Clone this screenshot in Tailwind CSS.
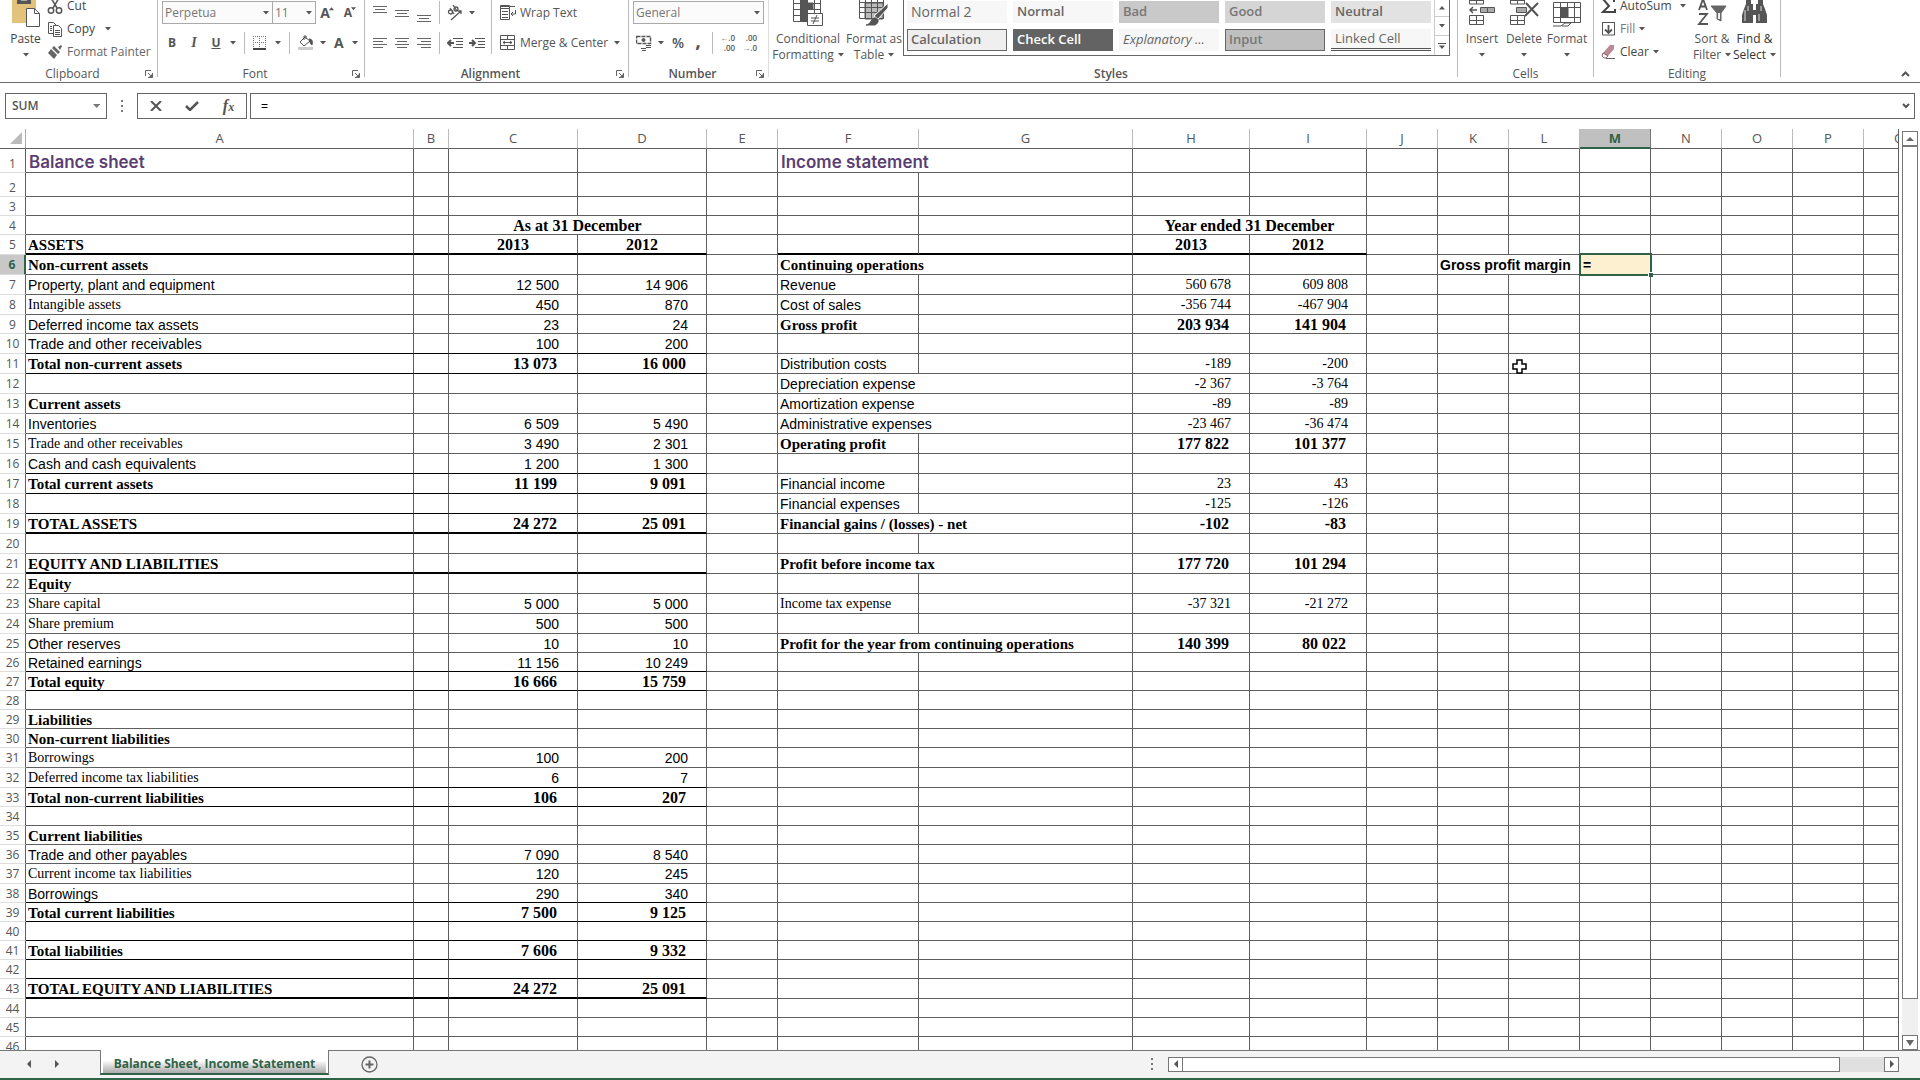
<!DOCTYPE html>
<html lang="en">
<head>
  <meta charset="UTF-8" />
  <meta name="viewport" content="width=device-width, initial-scale=1.0"/>
  <title>Balance Sheet, Income Statement</title>
  <script src="https://cdn.jsdelivr.net/npm/@tailwindcss/browser@4"></script>
</head>
<body class="h-screen flex flex-col overflow-hidden bg-white text-xs text-[#555] font-['Open_Sans',sans-serif]">

  <!-- shared icons -->
  <svg class="hidden">
    <symbol id="chev" viewBox="0 0 6 4"><path d="M0 0h6L3 3.5z" fill="#555"/></symbol>
    <symbol id="launcher" viewBox="0 0 8 8"><path d="M.5 6V.5H6M3 3l3 3M7.5 3v4.5H3" fill="none" stroke="#666"/><path d="M7.500 3.500v4h-4z" fill="#666"/></symbol>
  </svg>

  <!-- ribbon -->
  <header class="flex shrink-0 h-[83px] border-b border-[#6b6b6b] overflow-hidden whitespace-nowrap">
    <section class="w-[157px] flex flex-col">
      <div class="h-16 shrink-0 pb-px flex items-end overflow-hidden">
        <button class="w-[47px] pl-1 flex flex-col items-center leading-4 text-[#444]">
          <svg class="w-[30px] h-[36px] shrink-0 mb-1" viewBox="0 0 30 36"><path d="M1 8h24v24H1z" fill="#e3c27c"/><path d="M6 4h14v9H6z" fill="#555"/><path d="M10 6.500h6v3h-6z" fill="#fff"/><path d="M15.500 17.500h8l5 5v13h-13z" fill="#fff" stroke="#555"/><path d="M23.500 17.500v5h5" fill="none" stroke="#555"/></svg>
          <span>Paste</span>
          <svg class="w-1.5 h-1 my-1.5"><use href="#chev"/></svg>
        </button>
        <div class="flex flex-col text-[#444]">
          <button class="h-[23px] flex items-center gap-1">
            <svg class="w-4 h-4" viewBox="0 0 16 16" fill="none" stroke="#555" stroke-width="1.500"><path d="M4 0l6 10M12 0L6 10"/><circle cx="4" cy="12.500" r="2.700"/><circle cx="12" cy="12.500" r="2.700"/></svg>Cut
          </button>
          <button class="h-[23px] flex items-center gap-1">
            <svg class="w-4 h-4" viewBox="0 0 16 16" fill="#fff" stroke="#555"><path d="M1.500 1.500h5l3 3v8h-8z"/><path d="M6.500 4.500h5l3 3v8h-8z"/><path d="M8 9.500h5M8 11.500h5M8 13.500h5M3 5.500h2M3 7.500h2M3 9.500h2"/></svg>Copy
            <svg class="w-1.5 h-1 ml-1.5"><use href="#chev"/></svg>
          </button>
          <button class="h-[23px] flex items-center gap-1 text-[#666]">
            <svg class="w-4 h-4" viewBox="0 0 16 16" fill="#666"><path d="M11 3l3-2 1 1-2 4zM7 2l6 6-2 2-6-6z"/><path d="M4 5l6 6-3 4-6-6z"/></svg>Format Painter
          </button>
        </div>
      </div>
      <div class="flex items-center justify-center leading-5"><span class="flex-1 text-center">Clipboard</span><svg class="w-2 h-2 mr-1"><use href="#launcher"/></svg></div>
    </section>
    <div class="w-px h-[77px] bg-[#bbb]"></div>

    <section class="w-[206px] flex flex-col">
      <div class="h-16 shrink-0 pt-px flex flex-col gap-2">
        <div class="flex items-center">
          <label class="relative ml-1 flex items-center"><select aria-label="Font name" class="appearance-none w-[111px] h-[23px] border border-[#aaa] bg-[#fbfbfb] pl-0.5 text-[#777]"><option>Perpetua</option></select><svg class="absolute right-1 w-1.5 h-1"><use href="#chev"/></svg></label>
          <label class="relative flex items-center"><select aria-label="Font size" class="appearance-none w-[43px] h-[23px] border border-l-0 border-[#aaa] bg-[#fbfbfb] pl-0.5 text-[#777]"><option>11</option></select><svg class="absolute right-1 w-1.5 h-1"><use href="#chev"/></svg></label>
          <button aria-label="Increase font size" class="w-[22px] flex justify-center font-bold text-sm">A<svg class="w-[5px] h-1 mt-1 -ml-px" viewBox="0 0 6 4"><path d="M0 3.500h6L3 0z" fill="#555"/></svg></button>
          <button aria-label="Decrease font size" class="w-6 flex justify-center font-bold">A<svg class="w-[5px] h-1 mt-0.5 -ml-px"><use href="#chev"/></svg></button>
        </div>
        <div class="flex items-center h-[22px]">
          <button class="w-[22px] ml-[3px] font-bold">B</button>
          <button class="w-[22px] font-bold italic font-['Liberation_Serif',serif] text-sm">I</button>
          <button class="w-[22px] font-bold underline">U</button>
          <svg class="w-1.5 h-1 ml-[3px]"><use href="#chev"/></svg>
          <div class="w-px h-full ml-2 bg-[#bbb]"></div>
          <button class="ml-2 flex items-center gap-2">
            <svg class="w-3.5 h-3.5" viewBox="0 0 14 14" fill="none" stroke="#777"><path d="M.5 0v12M6.500 0v12M12.500 0v12M0 .5h13M0 6.500h13" stroke-dasharray="1 1"/><path d="M0 13h13" stroke="#444" stroke-width="2"/></svg>
            <svg class="w-1.5 h-1"><use href="#chev"/></svg>
          </button>
          <div class="w-px h-full ml-2 bg-[#bbb]"></div>
          <button class="ml-2 flex items-center gap-1.5">
            <svg class="w-4 h-4" viewBox="0 0 16 16" fill="none" stroke="#555"><path d="M7 2L2 7l4 4 6-5zM6 5V1h2v3"/><path d="M11 4c3 0 4 2 3 6-2-1-2-3-3-6z" fill="#555"/><path d="M0 13.500h15" stroke="#ccc" stroke-width="3"/></svg>
            <svg class="w-1.5 h-1"><use href="#chev"/></svg>
          </button>
          <button class="ml-2 flex items-center gap-2 font-bold text-sm">A<svg class="w-1.5 h-1"><use href="#chev"/></svg></button>
        </div>
      </div>
      <div class="flex items-center leading-5"><span class="flex-1 text-center">Font</span><svg class="w-2 h-2 mr-1"><use href="#launcher"/></svg></div>
    </section>
    <div class="w-px h-[77px] bg-[#bbb]"></div>

    <section class="w-[263px] flex flex-col">
      <div class="h-16 shrink-0 flex">
        <div class="flex flex-col gap-2 pt-px">
          <div class="flex items-center h-[23px]">
            <svg class="w-[59px] h-5 ml-2" viewBox="0 0 59 20" stroke="#666"><path d="M0 3.500h14M2 6.500h10M0 9.500h14M22 7.500h14M24 10.500h10M22 13.500h14M44 12.500h14M46 15.500h10M44 18.500h14"/></svg>
            <div class="w-px h-full ml-[7px] bg-[#bbb]"></div>
            <button class="ml-[7px] flex items-center gap-1.5">
              <svg class="w-4 h-4" viewBox="0 0 16 16" fill="none" stroke="#555" stroke-width="1.300"><circle cx="3.500" cy="7" r="2"/><path d="M3 3l4 6M6 0l4 6"/><circle cx="9" cy="4" r="2"/><path d="M4 15L14 6M11 6h3v3"/></svg>
              <svg class="w-1.5 h-1"><use href="#chev"/></svg>
            </button>
          </div>
          <div class="flex items-center h-[22px]">
            <svg class="w-[59px] h-3 ml-2" viewBox="0 0 59 12" stroke="#666"><path d="M0 1.500h14M0 4.500h10M0 7.500h14M0 10.500h10M22 1.500h14M24 4.500h10M22 7.500h14M24 10.500h10M44 1.500h14M48 4.500h10M44 7.500h14M48 10.500h10"/></svg>
            <div class="w-px h-full ml-[7px] bg-[#bbb]"></div>
            <svg class="w-10 h-3 ml-[7px]" viewBox="0 0 40 12" stroke="#555" fill="none"><path d="M6 1.500h10M9 4.500h7M9 7.500h7M6 10.500h10M28 1.500h10M31 4.500h7M31 7.500h7M28 10.500h10"/><path d="M7 6H1M4 3L1 6l3 3M22 6h6M25 3l3 3-3 3" stroke-width="2"/></svg>
          </div>
        </div>
        <div class="w-px h-[54px] ml-1 bg-[#bbb]"></div>
        <div class="flex flex-col gap-2 pt-px">
          <button class="h-[23px] ml-2 flex items-center gap-1">
            <svg class="w-4 h-4" viewBox="0 0 16 16" fill="none" stroke="#555"><path d="M.5.5h9v3h-9zM.5 3.500h9v11h-9zM2 6.500h6M2 9.500h6M2 12.500h6M1 1.500h14M15.500 5v4H11M13 7l-2 2 2 2"/></svg>Wrap Text
          </button>
          <button class="h-[22px] ml-2 flex items-center gap-1">
            <svg class="w-4 h-4" viewBox="0 0 16 16" fill="none" stroke="#555"><path d="M.5.5h14v14H.5zM0 4.500h15M0 10.500h15M7.500 0v4M7.500 11v4M3 7.500h9M5 6L3 7.500 5 9M10 6l2 1.500L10 9"/></svg>Merge &amp; Center
            <svg class="w-1.5 h-1 ml-0.5"><use href="#chev"/></svg>
          </button>
        </div>
      </div>
      <div class="flex items-center leading-5 font-semibold"><span class="flex-1 text-center">Alignment</span><svg class="w-2 h-2 mr-1"><use href="#launcher"/></svg></div>
    </section>
    <div class="w-px h-[77px] bg-[#bbb]"></div>

    <section class="w-[139px] flex flex-col">
      <div class="h-16 shrink-0 pt-px flex flex-col gap-2">
        <label class="relative ml-1 w-[131px] flex items-center"><select aria-label="Number format" class="appearance-none w-full h-[23px] border border-[#aaa] bg-[#fbfbfb] pl-0.5 text-[#777]"><option>General</option></select><svg class="absolute right-1 w-1.5 h-1"><use href="#chev"/></svg></label>
        <div class="flex items-center h-[22px]">
          <svg class="w-4 h-4 ml-[7px]" viewBox="0 0 16 16" fill="none" stroke="#555"><path d="M.5 1.500h14v7H.5z" stroke-dasharray="4 1" stroke-width="1.500"/><circle cx="7.500" cy="5" r="1.500" fill="#555"/><path d="M10 10.500h5M5 13.500h5M10 12.500h5M6 15.500h4"/></svg>
          <svg class="w-1.5 h-1 ml-1.5"><use href="#chev"/></svg>
          <button class="ml-2 text-sm font-semibold">%</button>
          <button class="ml-2 w-3 h-[22px] pb-1.5 text-xl leading-3 font-bold">,</button>
          <div class="w-px h-full ml-2 bg-[#bbb]"></div>
          <button aria-label="Increase decimal" class="ml-1.5 w-4 text-[8px] leading-[10px] font-semibold text-right">←.0<br>.00</button>
          <button aria-label="Decrease decimal" class="ml-1.5 w-4 text-[8px] leading-[10px] font-semibold text-right">.00<br>→.0</button>
        </div>
      </div>
      <div class="flex items-center leading-5 font-semibold"><span class="flex-1 text-center">Number</span><svg class="w-2 h-2 mr-1"><use href="#launcher"/></svg></div>
    </section>
    <div class="w-px h-[77px] bg-[#ddd]"></div>

    <section class="w-[688px] flex flex-col">
      <div class="h-16 shrink-0 flex">
        <div class="flex items-end pb-px">
          <button class="w-[74px] ml-0.5 flex flex-col items-center leading-4">
            <svg class="w-[30px] h-[30px] mb-1" viewBox="0 0 30 30" fill="none" stroke="#555"><path d="M.5.5h27v24H.5zM.5 6.500h27M.5 12.500h27M.5 18.500h27M7.500 0v24M14.500 0v24M21.500 0v24"/><path d="M8 0h6v6h6v6h-6v12H8z" fill="#555"/><path d="M14.500 16.500h15v12h-15z" fill="#fff"/><path d="M18 21h8M18 24h8M24 18l-4 9"/></svg>
            <span>Conditional</span><span class="flex items-center gap-1">Formatting<svg class="w-1.5 h-1"><use href="#chev"/></svg></span>
          </button>
          <button class="w-[58px] flex flex-col items-center leading-4">
            <svg class="w-[30px] h-[30px] mb-1" viewBox="0 0 30 30" fill="none" stroke="#555"><path d="M6 6h18v16H6z" fill="#bbb"/><path d="M.5.5h24v21H.5zM.5 5.500h24M.5 10.500h24M.5 15.500h24M6.500 0v21M12.500 0v21M18.500 0v21"/><path d="M29 6v5L19 22l-4-3z" fill="#555" stroke="#fff"/><path d="M7 28c5 0 5-8 10-7 3 1 3 5-1 7z" fill="#555"/></svg>
            <span>Format as</span><span class="flex items-center gap-1">Table<svg class="w-1.5 h-1"><use href="#chev"/></svg></span>
          </button>
        </div>
        <div class="h-14 flex border border-t-0 border-[#666]">
          <div class="grid grid-cols-[repeat(5,100px)] grid-rows-[22px_22px] gap-1.5 pt-px px-[3px] text-left font-semibold text-[13px] text-[#666]">
            <button class="bg-[#f7f7f7] pl-1 text-left text-sm font-normal">Normal 2</button>
            <button class="bg-[#f7f7f7] pl-1 text-left">Normal</button>
            <button class="bg-[#c9c9c9] pl-1 text-left text-[#777]">Bad</button>
            <button class="bg-[#d5d5d5] pl-1 text-left text-[#777]">Good</button>
            <button class="bg-[#e2e2e2] pl-1 text-left">Neutral</button>
            <button class="bg-[#efefef] border border-[#666] pl-[3px] text-left">Calculation</button>
            <button class="bg-[#636363] pl-1 text-left text-white">Check Cell</button>
            <button class="bg-[#f7f7f7] pl-1 text-left italic font-normal">Explanatory ...</button>
            <button class="bg-[#bfbfbf] border border-[#666] pl-[3px] text-left text-[#777]">Input</button>
            <button class="bg-[#f7f7f7] border-b-3 border-double border-[#555] pl-1 text-left font-normal">Linked Cell</button>
          </div>
          <div class="w-[15px] flex flex-col border-l border-[#ccc]">
            <button aria-label="Row up" class="h-[17px] flex items-center justify-center border-b border-[#ccc]"><svg class="w-1.5 h-1" viewBox="0 0 6 4"><path d="M0 3.500h6L3 0z" fill="#555"/></svg></button>
            <button aria-label="Row down" class="h-[19px] flex items-center justify-center border-b border-[#ccc]"><svg class="w-1.5 h-1"><use href="#chev"/></svg></button>
            <button aria-label="More styles" class="h-[19px] flex items-center justify-center"><svg class="w-2 h-1.5" viewBox="0 0 8 6" fill="#555"><path d="M0 0h8v1H0zM1 2.500h6L4 6z"/></svg></button>
          </div>
        </div>
      </div>
      <div class="text-center leading-5 font-semibold pr-1">Styles</div>
    </section>
    <div class="w-px h-[77px] bg-[#bbb]"></div>

    <section class="w-[135px] flex flex-col">
      <div class="h-16 shrink-0 pb-px pl-1 flex items-end">
        <button class="w-[40px] flex flex-col items-center leading-4">
          <svg class="w-[28px] h-[30px] mb-1" viewBox="0 0 28 30" fill="none" stroke="#555"><path d="M1.500 0v7h14V0M8.500 0v7M1.500 3.500h14M1.500 18.500h14v9h-14zM8.500 18v10M1.500 23.500h14"/><path d="M12.500 10.500h14v5h-14z" fill="#aaa"/><path d="M19.500 10v6"/><path d="M9 13H2M5 10l-3 3 3 3" stroke-width="1.500"/></svg>
          <span>Insert</span><svg class="w-1.5 h-1 my-1.5"><use href="#chev"/></svg>
        </button>
        <button class="w-[44px] flex flex-col items-center leading-4">
          <svg class="w-[30px] h-[30px] mb-1" viewBox="0 0 30 30" fill="none" stroke="#555"><path d="M1.500 0v7h14V0M8.500 0v7M1.500 3.500h14M1.500 18.500h14v9h-14zM8.500 18v10M1.500 23.500h14"/><path d="M7.500 10.500h10v5h-10z" fill="#aaa"/><path d="M17 6l12 13M29 6L16 19" stroke-width="2"/></svg>
          <span>Delete</span><svg class="w-1.5 h-1 my-1.5"><use href="#chev"/></svg>
        </button>
        <button class="w-[42px] flex flex-col items-center leading-4">
          <svg class="w-[30px] h-[30px] mb-1" viewBox="0 0 30 30" fill="none" stroke="#555"><path d="M2 1h24M5 0v3M23 0v3M1.500 5.500h27v20h-27zM1.500 10.500h27M1.500 20.500h27M8.500 5v20M15.500 5v6M22.500 5v20M1 29h8l4-3h6l-3 3h-6"/><path d="M9 11h7v9H9z" fill="#555"/></svg>
          <span>Format</span><svg class="w-1.5 h-1 my-1.5"><use href="#chev"/></svg>
        </button>
      </div>
      <div class="text-center leading-5 font-medium">Cells</div>
    </section>
    <div class="w-px h-[77px] bg-[#bbb]"></div>

    <section class="w-[186px] flex flex-col">
      <div class="h-16 shrink-0 pb-px pl-[7px] flex items-end">
        <div class="w-[94px] flex flex-col text-[#444]">
          <button class="h-[23px] flex items-center gap-1">
            <svg class="w-[15px] h-4" viewBox="0 0 15 16" fill="none" stroke="#444" stroke-width="2"><path d="M13 4V1H2l6 7-6 6h12v-3"/></svg>AutoSum
            <svg class="w-1.5 h-1 ml-1"><use href="#chev"/></svg>
          </button>
          <button class="h-[23px] flex items-center gap-1 text-[#777]">
            <svg class="w-[15px] h-[15px]" viewBox="0 0 15 15" fill="none" stroke="#555"><path d="M1.500 1v13h12V1M1 1.500h13" /><path d="M7.500 4v8M4 8.500L7.500 12 11 8.500" stroke-width="1.800"/></svg>Fill<svg class="w-1.5 h-1"><use href="#chev"/></svg>
          </button>
          <button class="h-[23px] flex items-center gap-1">
            <svg class="w-[15px] h-4" viewBox="0 0 15 16"><path d="M9 1h4v4l-6 7H3L2 9z" fill="#b88a94"/><path d="M2 9l5 3-2 2H3l-2-2z" fill="#fff" stroke="#965f6c"/><path d="M5 14.500h9" stroke="#666"/></svg>Clear<svg class="w-1.5 h-1"><use href="#chev"/></svg>
          </button>
        </div>
        <button class="w-[34px] flex flex-col items-center leading-4">
          <svg class="w-[30px] h-[30px] mb-1" viewBox="0 0 30 30" fill="none" stroke="#555" stroke-width="1.800"><path d="M2 13L6 2l4 11M3 9.500h6M2 17h8L2 27h9"/><path d="M14 9h15l-5 7v8l-4-2v-6z" fill="#666" stroke="#666" stroke-width="1"/><path d="M22 16v6" stroke="#fff"/></svg>
          <span>Sort &amp;</span><span class="flex items-center gap-1">Filter<svg class="w-1.5 h-1"><use href="#chev"/></svg></span>
        </button>
        <button class="w-[51px] flex flex-col items-center leading-4 text-[#333]">
          <svg class="w-[27px] h-[30px] mb-1" viewBox="0 0 27 30" fill="#555"><path d="M5 3h5v4h2v6h3V7h2V3h5v4l2 5 2 6v8H15v-8h-3v8H1v-8l2-6 2-5z"/><path d="M4 13v11M7 9v5M20 9v5M18 17v7" stroke="#ddd"/></svg>
          <span>Find &amp;</span><span class="flex items-center gap-1">Select<svg class="w-1.5 h-1"><use href="#chev"/></svg></span>
        </button>
      </div>
      <div class="text-center leading-5 font-medium">Editing</div>
    </section>
    <div class="w-px h-[77px] bg-[#bbb]"></div>
    <div class="flex-1 flex items-end justify-end pb-1 pr-2.5">
      <button aria-label="Collapse ribbon"><svg class="w-[9px] h-2" viewBox="0 0 9 8" fill="none" stroke="#555" stroke-width="2"><path d="M1 6l3.500-3.500L8 6"/></svg></button>
    </div>
  </header>

  <!-- formula bar -->
  <div class="flex shrink-0 py-2.5 pl-[5px] pr-[5px]">
    <div class="w-[102px] h-[26px] flex items-center border border-[#666] pl-1.5 pr-1.5">
      <input aria-label="Name box" value="SUM" class="w-full min-w-0 font-semibold outline-none">
      <svg class="w-2 h-1" viewBox="0 0 6 4" preserveAspectRatio="none"><path d="M0 0h6L3 4z" fill="#777"/></svg>
    </div>
    <div class="w-[30px] flex flex-col items-center justify-center gap-[3px]"><i class="w-0.5 h-0.5 bg-[#777]"></i><i class="w-0.5 h-0.5 bg-[#777]"></i><i class="w-0.5 h-0.5 bg-[#777]"></i></div>
    <div class="w-[110px] h-[26px] flex items-center justify-around border border-[#666]">
      <button aria-label="Cancel"><svg class="w-3 h-2.5" viewBox="0 0 12 10" fill="none" stroke="#555" stroke-width="2"><path d="M1 0l10 10M11 0L1 10"/></svg></button>
      <button aria-label="Enter"><svg class="w-3.5 h-2.5" viewBox="0 0 14 10" fill="none" stroke="#555" stroke-width="2.500"><path d="M1 5l4 4 8-8"/></svg></button>
      <button class="font-['Liberation_Serif',serif] italic font-bold text-base leading-5">f<span class="text-xs">x</span></button>
    </div>
    <div class="flex-1 h-[26px] ml-[3px] flex items-center border border-[#666] pl-2.5 pr-1">
      <input aria-label="Formula bar" value="=" class="flex-1 text-black font-['Liberation_Sans',sans-serif] outline-none">
      <svg class="w-2 h-1.5" viewBox="0 0 8 6" fill="none" stroke="#555" stroke-width="2"><path d="M1 1l3 3 3-3"/></svg>
    </div>
  </div>

  <!-- sheet -->
  <main class="flex-1 min-h-0 flex">
    <div class="relative flex-1 min-w-0 overflow-hidden border-r border-[#5f5f5f]">
      <table class="table-fixed w-[1935px] border-separate border-spacing-0 text-black whitespace-nowrap">
        <colgroup>
          <col class="w-[26px]"><col class="w-[388px]"><col class="w-[35px]"><col class="w-[129px]"><col class="w-[129px]"><col class="w-[71px]"><col class="w-[141px]"><col class="w-[214px]"><col class="w-[117px]"><col class="w-[117px]"><col class="w-[71px]"><col class="w-[71px]"><col class="w-[71px]"><col class="w-[71px]"><col class="w-[71px]"><col class="w-[71px]"><col class="w-[71px]"><col class="w-[71px]">
        </colgroup>
        <thead><tr id="cols" class="h-5"></tr></thead>
        <tbody id="rows"></tbody>
      </table>
      <svg class="absolute left-[1512px] top-[230px] w-[15px] h-[15px]" viewBox="0 0 15 15"><path d="M5 1h5v4h4v5h-4v4H5v-4H1V5h4z" fill="#fff" stroke="#000" stroke-width="1.500"/></svg>
    </div>
    <div class="w-[21px] flex flex-col items-stretch pl-[3px] pr-0.5 pt-0.5">
      <button aria-label="Scroll up" class="h-[15px] flex items-center justify-center border border-[#777]"><svg class="w-2 h-1" viewBox="0 0 8 4"><path d="M0 4h8L4 0z" fill="#666"/></svg></button>
      <div class="flex-1 bg-[#f0f0f0]"><div class="h-[96%] bg-white border border-[#777]"></div></div>
      <button aria-label="Scroll down" class="h-[15px] flex items-center justify-center border border-[#777]"><svg class="w-2 h-1.5" viewBox="0 0 8 6"><path d="M0 0h8L4 6z" fill="#666"/></svg></button>
    </div>
  </main>

  <!-- sheet tabs -->
  <footer class="shrink-0 h-[30px] flex bg-[#f3f3f3] border-b-2 border-[#2f6246]">
    <div class="w-[100px] flex items-center border-t border-[#777] gap-6 pl-[27px] pb-0.5">
      <button aria-label="Previous sheet"><svg class="w-1 h-2" viewBox="0 0 4 8"><path d="M4 0v8L0 4z" fill="#555"/></svg></button>
      <button aria-label="Next sheet"><svg class="w-1 h-2" viewBox="0 0 4 8"><path d="M0 0v8l4-4z" fill="#555"/></svg></button>
    </div>
    <button class="w-[229px] h-[25px] pt-0.5 px-0.5 border-x border-[#777] border-b-2 border-b-[#2f6246] bg-white text-[#2f6246] font-bold"><span class="block h-[21px] leading-[23px] bg-linear-to-b from-white from-40% to-[#aaa]">Balance Sheet, Income Statement</span></button>
    <div class="flex-1 flex border-t border-[#777] pl-8 pb-px items-center">
      <button aria-label="New sheet"><svg class="w-[17px] h-[17px]" viewBox="0 0 17 17" fill="none" stroke="#666"><circle cx="8.500" cy="8.500" r="7.500" stroke-width="1.300"/><path d="M8.500 4.500v8M4.500 8.500h8" stroke-width="2"/></svg></button>
      <div class="flex-1"></div>
      <div class="flex flex-col gap-[3px] mr-[15px]"><i class="w-0.5 h-0.5 bg-[#777]"></i><i class="w-0.5 h-0.5 bg-[#777]"></i><i class="w-0.5 h-0.5 bg-[#777]"></i></div>
      <div class="w-[731px] h-[15px] flex mr-[21px] bg-[#e0e0e0]">
        <button aria-label="Scroll left" class="w-[15px] flex items-center justify-center border border-[#777] bg-white"><svg class="w-1 h-2" viewBox="0 0 4 8"><path d="M4 0v8L0 4z" fill="#555"/></svg></button>
        <div class="flex-1 flex"><div class="w-[657px] bg-white border border-l-0 border-[#777]"></div></div>
        <button aria-label="Scroll right" class="w-[15px] flex items-center justify-center border border-[#777] bg-white"><svg class="w-1 h-2" viewBox="0 0 4 8"><path d="M0 0v8l4-4z" fill="#555"/></svg></button>
      </div>
    </div>
  </footer>

  <script>
    const letters = 'ABCDEFGHIJKLMNOPQ'.split('');

    // cell styles
    const styles = {
      title: "align-bottom font-['Inter',sans-serif] font-semibold text-[17px] leading-5 text-[#5b3f73] pl-[3px]",
      sans: "align-top pt-0.5 font-['Liberation_Sans',sans-serif] text-sm leading-4 pl-0.5",
      serif: "align-top pt-0.5 font-['Liberation_Serif',serif] text-sm leading-4 pl-0.5",
      bold: "align-top pt-0.5 font-['Liberation_Serif',serif] font-bold text-[15px] leading-4 pl-0.5",
      center: "align-top pt-0.5 font-['Liberation_Serif',serif] font-bold text-base leading-4 text-center",
      numSans: "align-top pt-0.5 font-['Liberation_Sans',sans-serif] text-sm leading-4 text-right pr-[18px]",
      numSerif: "align-top pt-0.5 font-['Liberation_Serif',serif] text-sm leading-4 text-right pr-[18px]",
      numBold: "align-top pt-0.5 font-['Liberation_Serif',serif] font-bold text-base leading-4 text-right pr-5",
      label: "align-top pt-0.5 font-['Liberation_Sans',sans-serif] font-bold text-sm leading-4 pl-0.5"
    };

    // column: [text, style, colspan]
    const bs = (text, style, c, d, num) => c ? { A: [text, style], C: [c, num], D: [d, num] } : { A: [text, style] };
    const is = (text, style, h, i, num, span) => h ? { F: [text, style, span], H: [h, num], I: [i, num] } : { F: [text, style, span] };

    const cells = {
      1: { A: ['Balance sheet', 'title'], F: ['Income statement', 'title', 2] },
      4: { C: ['As at 31 December', 'center', 2], H: ['Year ended 31 December', 'center', 2] },
      5: { A: ['ASSETS', 'bold'], C: ['2013', 'center'], D: ['2012', 'center'], H: ['2013', 'center'], I: ['2012', 'center'] },
      6: { ...bs('Non-current assets', 'bold'), ...is('Continuing operations', 'bold', '', '', '', 2), K: ['Gross profit margin', 'label', 2] },
      7: { ...bs('Property, plant and equipment', 'sans', '12 500', '14 906', 'numSans'), ...is('Revenue', 'sans', '560 678', '609 808', 'numSerif') },
      8: { ...bs('Intangible assets', 'serif', '450', '870', 'numSans'), ...is('Cost of sales', 'sans', '-356 744', '-467 904', 'numSerif') },
      9: { ...bs('Deferred income tax assets', 'sans', '23', '24', 'numSans'), ...is('Gross profit', 'bold', '203 934', '141 904', 'numBold') },
      10: bs('Trade and other receivables', 'sans', '100', '200', 'numSans'),
      11: { ...bs('Total non-current assets', 'bold', '13 073', '16 000', 'numBold'), ...is('Distribution costs', 'sans', '-189', '-200', 'numSerif') },
      12: is('Depreciation expense', 'sans', '-2 367', '-3 764', 'numSerif', 2),
      13: { ...bs('Current assets', 'bold'), ...is('Amortization expense', 'sans', '-89', '-89', 'numSerif', 2) },
      14: { ...bs('Inventories', 'sans', '6 509', '5 490', 'numSans'), ...is('Administrative expenses', 'sans', '-23 467', '-36 474', 'numSerif', 2) },
      15: { ...bs('Trade and other receivables', 'serif', '3 490', '2 301', 'numSans'), ...is('Operating profit', 'bold', '177 822', '101 377', 'numBold') },
      16: bs('Cash and cash equivalents', 'sans', '1 200', '1 300', 'numSans'),
      17: { ...bs('Total current assets', 'bold', '11 199', '9 091', 'numBold'), ...is('Financial income', 'sans', '23', '43', 'numSerif') },
      18: is('Financial expenses', 'sans', '-125', '-126', 'numSerif'),
      19: { ...bs('TOTAL ASSETS', 'bold', '24 272', '25 091', 'numBold'), ...is('Financial gains / (losses) - net', 'bold', '-102', '-83', 'numBold', 2) },
      21: { ...bs('EQUITY AND LIABILITIES', 'bold'), ...is('Profit before income tax', 'bold', '177 720', '101 294', 'numBold', 2) },
      22: bs('Equity', 'bold'),
      23: { ...bs('Share capital', 'serif', '5 000', '5 000', 'numSans'), ...is('Income tax expense', 'serif', '-37 321', '-21 272', 'numSerif') },
      24: bs('Share premium', 'serif', '500', '500', 'numSans'),
      25: { ...bs('Other reserves', 'sans', '10', '10', 'numSans'), ...is('Profit for the year from continuing operations', 'bold', '140 399', '80 022', 'numBold', 2) },
      26: bs('Retained earnings', 'sans', '11 156', '10 249', 'numSans'),
      27: bs('Total equity', 'bold', '16 666', '15 759', 'numBold'),
      29: bs('Liabilities', 'bold'),
      30: bs('Non-current liabilities', 'bold'),
      31: bs('Borrowings', 'serif', '100', '200', 'numSans'),
      32: bs('Deferred income tax liabilities', 'serif', '6', '7', 'numSans'),
      33: bs('Total non-current liabilities', 'bold', '106', '207', 'numBold'),
      35: bs('Current liabilities', 'bold'),
      36: bs('Trade and other payables', 'sans', '7 090', '8 540', 'numSans'),
      37: bs('Current income tax liabilities', 'serif', '120', '245', 'numSans'),
      38: bs('Borrowings', 'sans', '290', '340', 'numSans'),
      39: bs('Total current liabilities', 'bold', '7 500', '9 125', 'numBold'),
      41: bs('Total liabilities', 'bold', '7 606', '9 332', 'numBold'),
      43: bs('TOTAL EQUITY AND LIABILITIES', 'bold', '24 272', '25 091', 'numBold')
    };

    const thin = [10, 11, 16, 17, 18, 26, 27, 32, 33, 38, 39, 40, 41, 42];
    const thick = [5, 19, 21, 43];
    const short = [3, 4, 9, 25, 26, 27, 28, 29, 30, 33, 34, 35, 36, 38, 39, 40, 41, 42, 44, 45, 46];

    function rowHeight(n) {
      if (n < 3) return 'h-6';
      return short.includes(n) ? 'h-[19px]' : 'h-5';
    }

    function bottomBorder(n, col) {
      const left = 'ABCD'.includes(col);
      if (thick.includes(n) && (left || (n === 5 && 'FGHI'.includes(col)))) return 'border-b-2 border-b-black';
      if (thin.includes(n) && left) return 'border-b border-b-black';
      return 'border-b border-b-[#5f5f5f]';
    }

    document.getElementById('cols').innerHTML =
      `<th class="p-0 border-b border-b-[#5f5f5f] border-r border-r-[#aaa] align-bottom"><svg class="w-3 h-3 ml-2.5 mb-1" viewBox="0 0 12 12"><path d="M12 0v12H0z" fill="#bbb"/></svg></th>` +
      letters.map(l => l === 'M'
        ? `<th class="p-0 align-top border-b-2 border-b-[#2f6246] border-r border-r-[#777] bg-[#c0c0c0] text-[13px] leading-[18px] font-bold text-[#2f6246]">${l}</th>`
        : `<th class="p-0 align-top border-b border-b-[#5f5f5f] border-r border-r-[#bbb] text-[13px] leading-[18px] font-normal text-[#555]">${l}</th>`).join('');

    let html = '';
    for (let n = 1; n <= 46; n++) {
      const head = n === 6
        ? 'border-r-2 border-r-[#2f6246] bg-[#c8c8c8] font-bold text-[#2f6246]'
        : 'border-r border-r-[#5f5f5f] font-normal text-[#555]';
      const valign = n < 3 ? 'align-bottom' : 'align-top pt-0.5';
      html += `<tr class="${rowHeight(n)}"><th class="p-0 ${valign} text-center text-xs leading-4 border-b border-b-[#ddd] ${head}">${n}</th>`;
      const row = cells[n] || {};
      for (let i = 0; i < letters.length; i++) {
        const col = letters[i];
        const [text, style, span] = row[col] || ['', 'sans'];
        if (n === 6 && col === 'M') {
          html += `<td class="relative p-0"><div class="absolute -left-px -top-0.5 -right-px -bottom-px border-2 border-[#2f6246] bg-[#fdf0d0] flex items-center">
            <input aria-label="M6" value="=" class="w-full pl-0.5 leading-4 font-['Liberation_Sans',sans-serif] font-bold text-sm outline-none">
            <i class="absolute -right-[3px] -bottom-[3px] w-[5px] h-[5px] bg-[#2f6246] border-t border-l border-white"></i></div></td>`;
          continue;
        }
        html += `<td colspan="${span || 1}" class="p-0 border-r border-r-[#5f5f5f] ${bottomBorder(n, col)} ${styles[style]}">${text}</td>`;
        if (span) i += span - 1;
      }
      html += '</tr>';
    }
    document.getElementById('rows').innerHTML = html;
  </script>
</body>
</html>
